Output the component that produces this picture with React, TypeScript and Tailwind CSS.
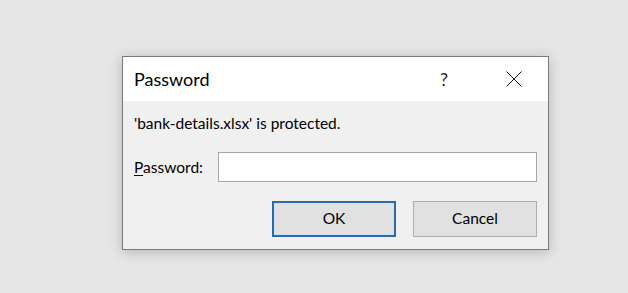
import React from "react";

export default function App() {
  return (
    <div className="min-h-[293px] w-[628px] bg-[#e6e6e6] pl-[122px] pt-[56px] font-['Segoe_UI','Lato',sans-serif] text-black">
      <div className="flex h-[194px] w-[427px] flex-col border border-[#7a7a7a] bg-[#f0f0f0] shadow-[0_2px_12px_rgba(0,0,0,0.22)]">
        {/* Title bar */}
        <div className="flex h-[44px] items-center bg-white pl-[11px] pr-[26px]">
          <div className="text-[18px] leading-none">Password</div>
          <div className="ml-auto text-[18px] leading-none text-[#222]">?</div>
          <svg viewBox="0 0 16 16" className="ml-[58px] h-[16px] w-[16px]" fill="none" stroke="#111" strokeWidth="1">
            <path d="M0.5 0.5 L15.5 15.5 M15.5 0.5 L0.5 15.5" />
          </svg>
        </div>

        {/* Body */}
        <div className="flex flex-1 flex-col px-[11px] pt-[12px]">
          <div className="text-[15.5px] leading-[20px]">'bank-details.xlsx' is protected.</div>

          <div className="mt-[19px] flex items-center">
            <label className="w-[84px] text-[15.5px] leading-[20px]">
              <span className="underline underline-offset-2">P</span>assword:
            </label>
            <input
              type="password"
              className="h-[30px] flex-1 border border-[#a6a6a6] bg-white outline-none"
            />
          </div>

          <div className="mt-[19px] flex justify-end gap-[17px]">
            <button className="h-[36px] w-[124px] border-2 border-[#2d6aa5] bg-[#e1e1e1] text-[15.5px] shadow-[inset_0_0_0_1px_#cfe4f7]">
              OK
            </button>
            <button className="h-[36px] w-[124px] border border-[#adadad] bg-[#e1e1e1] text-[15.5px]">
              Cancel
            </button>
          </div>
        </div>
      </div>
    </div>
  );
}
